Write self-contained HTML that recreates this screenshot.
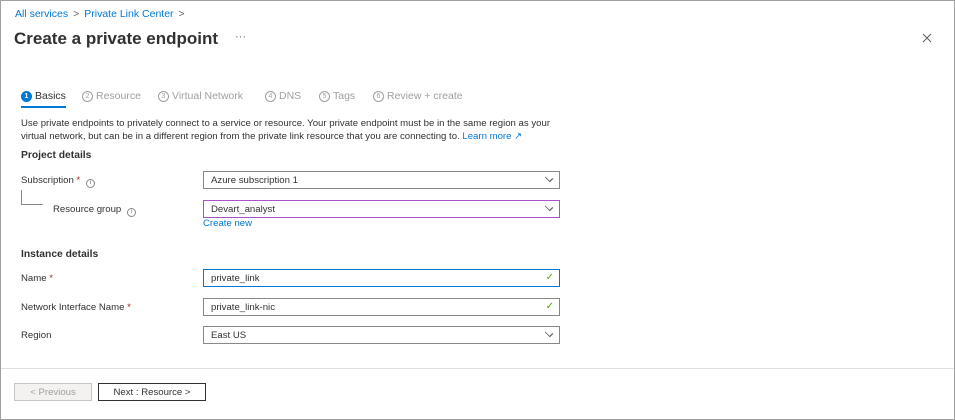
<!DOCTYPE html>
<html><head><style>
*{box-sizing:border-box;margin:0;padding:0}
body{width:955px;height:420px;background:#fff;font-family:"Segoe UI","Liberation Sans",sans-serif;color:#323130;position:relative;overflow:hidden}
.frame{position:absolute;left:0;top:0;width:955px;height:420px;border:1px solid #a0a0a0}
.a{position:absolute;white-space:nowrap}
.bc{font-size:10.5px;color:#0078d4;top:8px;left:15px}
.bc span{color:#605e5c;margin:0 5px}
.title{top:29px;left:14px;font-size:17px;color:#323130;font-weight:600}
.dots{top:31px;left:235px;color:#605e5c;font-size:11px}
.tab{top:90px;font-size:10.5px;color:#a19f9d}
.num{display:inline-block;width:11px;height:11px;border-radius:50%;border:1px solid #a19f9d;font-size:7px;text-align:center;line-height:9px;vertical-align:1px;margin-right:3px}
.tab.on{color:#323130}
.tab.on .num{background:#0078d4;border-color:#0078d4;color:#fff;font-weight:bold}
.ul{top:106px;left:21px;width:45px;height:2px;background:#0078d4}
.p{font-size:9.6px;left:21px;color:#323130}
.h{font-size:10.3px;font-weight:600;left:21px}
.lbl{font-size:9.6px;left:21px}
.req{color:#a4262c}
.info{display:inline-block;width:9px;height:9px;border:1px solid #8a8886;border-radius:50%;font-size:6px;text-align:center;line-height:7px;color:#605e5c;margin-left:6px;vertical-align:-1px}
.in{position:absolute;left:203px;width:357px;height:18px;border:1px solid #8a8886;font-size:9.6px;padding:2px 7px 0;line-height:14px}
.chev{position:absolute;right:7px;top:3px;width:6px;height:6px;border-right:1px solid #605e5c;border-bottom:1px solid #605e5c;transform:rotate(45deg) scale(1.2,.8)}
.chk{position:absolute;right:5px;top:1px;color:#57a300;font-size:10px}
.btn{position:absolute;top:383px;height:18px;font-size:9.6px;text-align:center;line-height:17px}
</style></head><body>
<div class="frame"></div>
<div class="a bc">All services<span>&gt;</span>Private Link Center<span>&gt;</span></div>
<div class="a title">Create a private endpoint</div>
<div class="a dots">···</div>
<svg class="a" style="left:922px;top:33px" width="10" height="10" viewBox="0 0 10 10"><path d="M1 1L9 9M9 1L1 9" stroke="#605e5c" stroke-width="1"/></svg>

<div class="a tab on" style="left:21px"><span class="num">1</span>Basics</div>
<div class="a tab" style="left:82px"><span class="num">2</span>Resource</div>
<div class="a tab" style="left:158px"><span class="num">3</span>Virtual Network</div>
<div class="a tab" style="left:265px"><span class="num">4</span>DNS</div>
<div class="a tab" style="left:319px"><span class="num">5</span>Tags</div>
<div class="a tab" style="left:373px"><span class="num">6</span>Review + create</div>
<div class="a ul"></div>

<div class="a p" style="top:118px">Use private endpoints to privately connect to a service or resource. Your private endpoint must be in the same region as your</div>
<div class="a p" style="top:131px">virtual network, but can be in a different region from the private link resource that you are connecting to. <span style="color:#0078d4">Learn more ↗</span></div>
<div class="a h" style="top:150px">Project details</div>

<div class="a lbl" style="top:175px">Subscription <span class="req">*</span><span class="info">i</span></div>
<div class="a" style="left:21px;top:190px;width:1px;height:14px;background:#8a8886"></div>
<div class="a" style="left:21px;top:204px;width:22px;height:1px;background:#8a8886"></div>
<div class="a lbl" style="top:204px;left:53px">Resource group<span class="info">i</span></div>
<div class="in" style="top:171px">Azure subscription 1<span class="chev"></span></div>
<div class="in" style="top:200px;border-color:#a855c7">Devart_analyst<span class="chev"></span></div>
<div class="a" style="left:203px;top:218px;font-size:9.6px;color:#0078d4">Create new</div>

<div class="a h" style="top:249px">Instance details</div>
<div class="a lbl" style="top:273px">Name <span class="req">*</span></div>
<div class="in" style="top:269px;border:1.5px solid #0078d4">private_link<span class="chk">✓</span></div>
<div class="a lbl" style="top:302px">Network Interface Name <span class="req">*</span></div>
<div class="in" style="top:298px">private_link-nic<span class="chk">✓</span></div>
<div class="a lbl" style="top:330px">Region</div>
<div class="in" style="top:326px">East US<span class="chev"></span></div>

<div class="a" style="left:1px;top:368px;width:953px;height:1px;background:#e1dfdd"></div>
<div class="btn" style="left:14px;width:78px;background:#f3f2f1;border:1px solid #c8c6c4;color:#a19f9d">&lt; Previous</div>
<div class="btn" style="left:98px;width:108px;border:1px solid #323130">Next : Resource &gt;</div>
</body></html>
